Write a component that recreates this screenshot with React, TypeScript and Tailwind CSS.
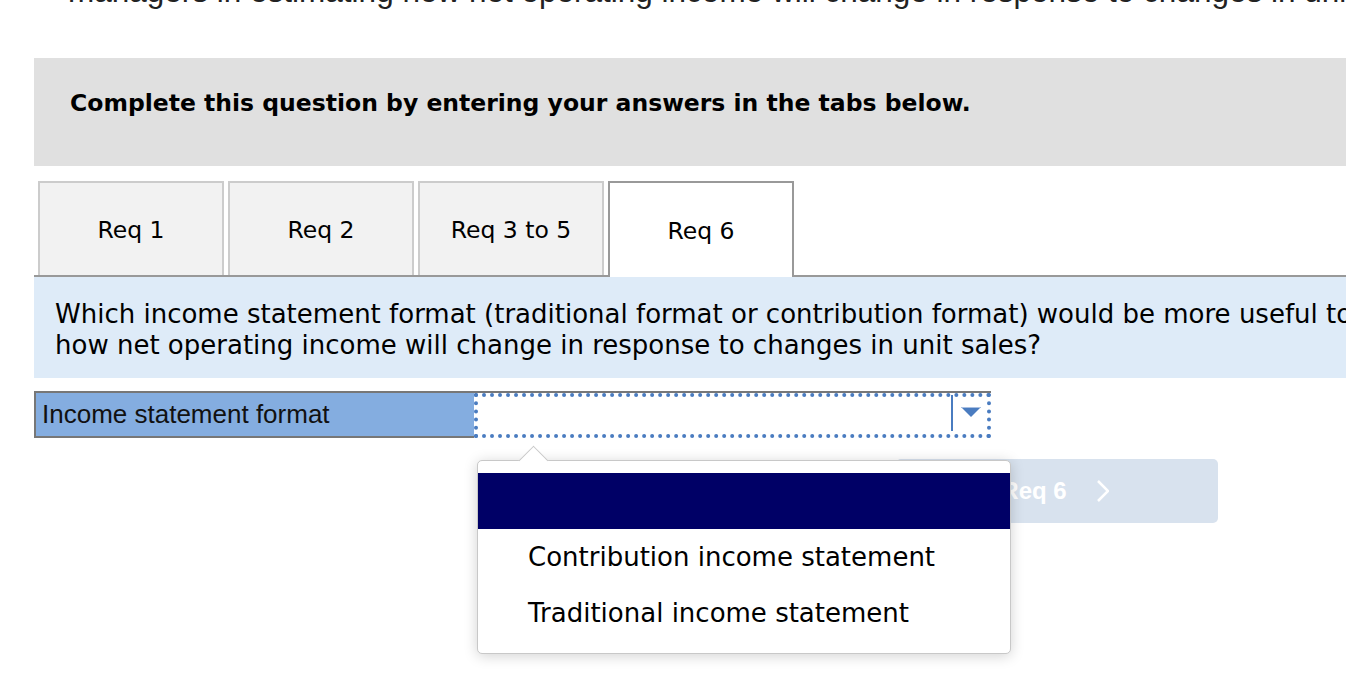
import React from 'react'

const tabs = [
  { label: 'Req 1', active: false },
  { label: 'Req 2', active: false },
  { label: 'Req 3 to 5', active: false },
  { label: 'Req 6', active: true },
]

const options = ['Contribution income statement', 'Traditional income statement']

export default function App() {
  return (
    <div className="relative w-[1346px] h-[690px] overflow-hidden bg-white">
      {/* leftover line of the question above, cut off by the viewport */}
      <div className="h-[10px] overflow-hidden">
        <div className="mt-[-27px] pl-[68px] whitespace-nowrap text-[31.5px] leading-[36px] text-[#222] font-['Liberation_Sans',Arial,sans-serif]">
          managers in estimating how net operating income will change in response to changes in unit sales?
        </div>
      </div>

      {/* instruction banner */}
      <div className="mt-[48px] ml-[34px] w-[1400px] h-[108px] bg-[#e0e0e0] pl-[36px] pt-[31px]">
        <span className="text-[23.5px] leading-[28px] font-bold text-black font-['DejaVu_Sans',Verdana,sans-serif]">
          Complete this question by entering your answers in the tabs below.
        </span>
      </div>

      {/* tabs */}
      <div className="mt-[15px] ml-[34px] w-[1400px] flex gap-[4px] pl-[4px] border-b-2 border-[#999]">
        {tabs.map((t) => (
          <div
            key={t.label}
            className={
              t.active
                ? 'w-[186px] h-[96px] -mb-[2px] bg-white border-2 border-b-0 border-[#999] flex items-center justify-center pt-[3px]'
                : 'w-[186px] h-[94px] bg-[#f2f2f2] border-2 border-b-0 border-[#ccc] flex items-center justify-center pt-[3px]'
            }
          >
            <span className="text-[23.5px] text-black font-['DejaVu_Sans',Verdana,sans-serif]">{t.label}</span>
          </div>
        ))}
      </div>

      {/* question */}
      <div className="ml-[34px] w-[1400px] h-[101px] bg-[#deebf8] pl-[21px] pt-[22px]">
        <p className="text-[26px] leading-[31px] text-black whitespace-nowrap font-['DejaVu_Sans',Verdana,sans-serif]">
          Which income statement format (traditional format or contribution format) would be more useful to managers in estimating
          <br />
          how net operating income will change in response to changes in unit sales?
        </p>
      </div>

      {/* answer row */}
      <div className="mt-[13px] ml-[34px] flex">
        <div className="w-[440px] h-[47px] bg-[#84ade0] border-t-2 border-b-2 border-l-2 border-[#777] flex items-center pl-[6px]">
          <span className="text-[26px] text-[#111] font-['Liberation_Sans',Arial,sans-serif]">Income statement format</span>
        </div>
        <div className="relative w-[517px] h-[47px] border-t-2 border-[#777]">
          <div className="h-[45px] border-4 border-dotted border-[#4a7cc0] bg-white flex justify-end">
            <div className="w-[2px] h-[36px] bg-[#4a7cc0] mr-[34px] -mt-[2px]" />
          </div>
          <svg className="absolute right-[10px] top-[14px]" width="20" height="10" viewBox="0 0 20 10">
            <polygon points="0,0 20,0 10,10" fill="#4a7cc0" />
            <line x1="0" y1="0.5" x2="20" y2="0.5" stroke="#a9c0e2" strokeWidth="1" />
          </svg>

          {/* open dropdown list */}
          <div className="absolute left-[3px] top-[67px] w-[534px] h-[194px] z-10 bg-white border border-[#c8c8c8] rounded-[5px] shadow-[0_2px_14px_rgba(0,0,0,0.18)] pt-[12px]">
            <div className="absolute left-[45px] top-[-11px] w-[21px] h-[21px] rotate-45 bg-white border-l border-t border-[#c8c8c8]" />
            <div className="relative h-[56px] bg-[#000066]" />
            {options.map((o) => (
              <div key={o} className="relative h-[56px] flex items-center pl-[50px]">
                <span className="text-[26px] text-black font-['DejaVu_Sans',Verdana,sans-serif]">{o}</span>
              </div>
            ))}
          </div>
        </div>
      </div>

      {/* next button, partly hidden by the list */}
      <div className="mt-[21px] ml-[896px]">
        <button className="w-[322px] h-[64px] rounded-[5px] bg-[#d8e2ee] flex items-center justify-center gap-[30px] pr-[4px] text-white">
          <span className="text-[24px] font-bold font-['Liberation_Sans',Arial,sans-serif]">Req 6</span>
          <svg width="12" height="22" viewBox="0 0 12 22" fill="none" stroke="white" strokeWidth="2.5">
            <polyline points="1,1 11,11 1,21" />
          </svg>
        </button>
      </div>
    </div>
  )
}
